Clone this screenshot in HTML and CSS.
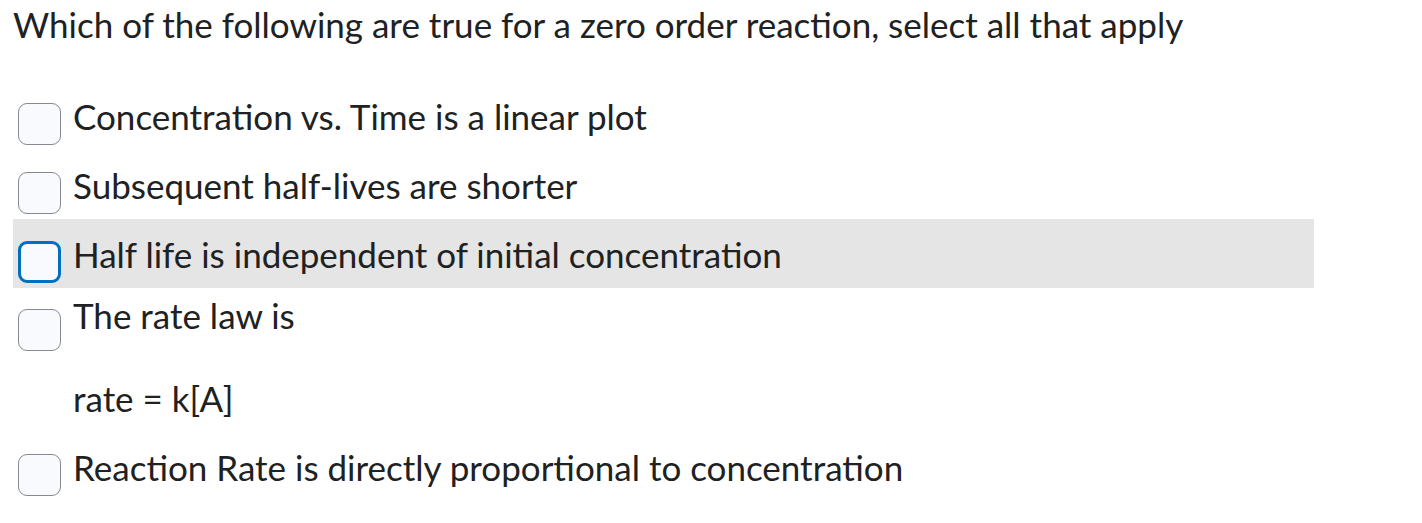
FILE: index.html
```html
<!DOCTYPE html>
<html lang="en">
<head>
<meta charset="utf-8">
<title>Question</title>
<link rel="stylesheet" href="styles.css">
</head>
<body>
<div class="question">
  <p class="prompt">Which of the following are true for a zero order reaction, select all that apply</p>
  <div class="options">
    <label class="option">
      <span class="box"></span>
      <span class="text">Concentration vs. Time is a linear plot</span>
    </label>
    <label class="option">
      <span class="box"></span>
      <span class="text">Subsequent half-lives are shorter</span>
    </label>
    <label class="option option-hover">
      <span class="box box-focus"></span>
      <span class="text">Half life is independent of initial concentration</span>
    </label>
    <label class="option option-multi">
      <span class="box"></span>
      <span class="text">The rate law is<br><br>rate = k[A]</span>
    </label>
    <label class="option">
      <span class="box"></span>
      <span class="text">Reaction Rate is directly proportional to concentration</span>
    </label>
  </div>
</div>
</body>
</html>
```
FILE: styles.css
```css
html, body {
  margin: 0;
  padding: 0;
  background: #ffffff;
}
body {
  font-family: Lato, "Noto Sans", sans-serif;
  color: #202122;
}
.question {
  margin-left: 13px;
  width: 1301px;
}
.prompt {
  margin: 4px 0 0 0;
  font-size: 35px;
  line-height: 41.5px;
}
.options {
  margin-top: 35.5px;
  display: flex;
  flex-direction: column;
}
.option {
  display: flex;
  align-items: flex-start;
  gap: 12px;
  padding: 15px 0 5px 5px;
  font-size: 35px;
  line-height: 41.5px;
}
.option-hover {
  background: #e5e5e5;
}
.option-multi {
  padding-top: 7px;
  padding-bottom: 12.5px;
}
.box {
  flex: none;
  box-sizing: border-box;
  width: 43px;
  height: 42px;
  margin-top: 7px;
  border: 1px solid #868a90;
  border-radius: 9px;
  background: #f9fafe;
}
.option-multi .box {
  margin-top: 14px;
}
.box-focus {
  border: 3px solid #006fbf;
}
.text {
  display: block;
}
```
